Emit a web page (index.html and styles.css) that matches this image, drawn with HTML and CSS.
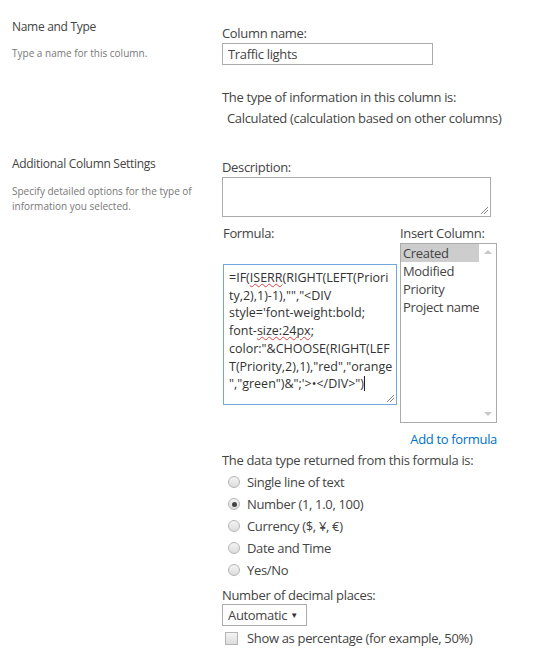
FILE: index.html
```html
<!DOCTYPE html>
<html lang="en">
<head>
  <meta charset="UTF-8">
  <title>Create Column</title>
  <link rel="stylesheet" href="styles.css">
</head>
<body>
  <div class="form">
    <div class="section first">
      <div class="side">
        <h3 class="side-title">Name and Type</h3>
        <p class="side-desc">Type a name for this column.</p>
      </div>
      <div class="fields">
        <div class="label">Column name:</div>
        <input class="text-input" type="text" value="Traffic lights">
        <div class="label type-label">The type of information in this column is:</div>
        <div class="type-value">Calculated (calculation based on other columns)</div>
      </div>
    </div>

    <div class="section second">
      <div class="side">
        <h3 class="side-title">Additional Column Settings</h3>
        <p class="side-desc">Specify detailed options for the type of information you selected.</p>
      </div>
      <div class="fields">
        <div class="label">Description:</div>
        <div class="desc-box">
          <svg class="grip" width="10" height="10" viewBox="0 0 10 10"><path d="M9 2 L2 9 M9 5 L5 9" stroke="#888" stroke-width="1"/></svg>
        </div>

        <div class="formula-row">
          <div class="formula-col">
            <div class="label">Formula:</div>
            <div class="formula-box">
              <div class="formula-text">=IF(<span class="spell">ISERR</span>(RIGHT(LEFT(Priori
ty,2),1)-1),"","&lt;DIV
style='font-weight:bold;
font-<span class="spell">size:24px</span>;
color:"&amp;CHOOSE(RIGHT(LEF
T(Priority,2),1),"red","orange
","green")&amp;";'&gt;•&lt;/DIV&gt;")<span class="caret"></span></div>
              <svg class="grip" width="10" height="10" viewBox="0 0 10 10"><path d="M9 2 L2 9 M9 5 L5 9" stroke="#888" stroke-width="1"/></svg>
            </div>
          </div>
          <div class="insert-col">
            <div class="label">Insert Column:</div>
            <div class="listbox">
              <ul class="options">
                <li class="selected">Created</li>
                <li>Modified</li>
                <li>Priority</li>
                <li>Project name</li>
              </ul>
              <div class="scrollbar">
                <span class="arrow up"></span>
                <span class="arrow down"></span>
              </div>
            </div>
          </div>
        </div>
        <div class="add-link"><a href="#">Add to formula</a></div>

        <div class="label">The data type returned from this formula is:</div>
        <ul class="radios">
          <li><span class="radio"></span>Single line of text</li>
          <li><span class="radio checked"></span>Number (1, 1.0, 100)</li>
          <li><span class="radio"></span>Currency ($, ¥, €)</li>
          <li><span class="radio"></span>Date and Time</li>
          <li><span class="radio"></span>Yes/No</li>
        </ul>

        <div class="label">Number of decimal places:</div>
        <div class="select">Automatic <span class="caret-down">▼</span></div>
        <div class="check-row"><span class="checkbox"></span>Show as percentage (for example, 50%)</div>
      </div>
    </div>
  </div>
</body>
</html>
```

FILE: styles.css
```css
body {
  margin: 0;
  background: #fff;
  font-family: "Open Sans", "Noto Sans", sans-serif;
  color: #444;
}
.section {
  display: flex;
}
.first {
  padding-top: 18px;
}
.second {
  padding-top: 28px;
}
.side {
  width: 222px;
  padding-left: 12px;
  box-sizing: border-box;
}
.side-title {
  margin: 0;
  font-size: 12px;
  letter-spacing: -0.3px;
  font-weight: normal;
  line-height: 18px;
  color: #444;
}
.side-desc {
  margin: 10px 0 0;
  font-size: 10px;
  line-height: 15px;
  color: #777;
  width: 190px;
}
.second .side-desc {
  margin-top: 11px;
}
.fields {
  width: 300px;
  font-size: 13px;
  letter-spacing: -0.33px;
}
.label {
  line-height: 18px;
  color: #444;
}
.first .fields {
  padding-top: 6px;
}
.second .fields {
  padding-top: 3px;
}
.text-input {
  display: block;
  margin: 1px 0 0;
  width: 211px;
  height: 22px;
  box-sizing: border-box;
  border: 1px solid #ababab;
  padding: 0 5px;
  font-family: inherit;
  font-size: 13px;
  letter-spacing: -0.33px;
  color: #444;
}
.type-label {
  margin-top: 23px;
}
.type-value {
  margin-top: 3px;
  padding-left: 5px;
  line-height: 18px;
}
.desc-box {
  position: relative;
  margin-top: 1px;
  width: 269px;
  height: 40px;
  box-sizing: border-box;
  border: 1px solid #ababab;
}
.grip {
  position: absolute;
  right: 1px;
  bottom: 1px;
}
.formula-row {
  display: flex;
  margin-top: 7px;
}
.formula-col {
  width: 177px;
  padding-left: 1px;
}
.formula-box {
  position: relative;
  margin-top: 22px;
  width: 174px;
  height: 141px;
  box-sizing: border-box;
  border: 1px solid #73a7dc;
  padding: 4px 0 0 5px;
}
.formula-text {
  white-space: pre;
  font-size: 12.5px;
  letter-spacing: 0;
  line-height: 17.7px;
  color: #333;
}
.spell {
  text-decoration: underline wavy #e04040;
  text-decoration-thickness: 1px;
}
.caret {
  display: inline-block;
  width: 1px;
  height: 15px;
  background: #222;
  vertical-align: -3px;
}
.insert-col {
  width: 98px;
}
.listbox {
  display: flex;
  margin-top: 1px;
  width: 97px;
  height: 180px;
  box-sizing: border-box;
  border: 1px solid #ababab;
}
.options {
  list-style: none;
  margin: 0;
  padding: 0;
  flex: 1;
  font-size: 13px;
  line-height: 18px;
  color: #444;
  white-space: nowrap;
  overflow: hidden;
}
.options li {
  padding-left: 2px;
}
.options .selected {
  background: #cdcdcd;
}
.scrollbar {
  position: relative;
  width: 17px;
  background: #fff;
}
.arrow {
  position: absolute;
  left: 5px;
  width: 0;
  height: 0;
  border-left: 4px solid transparent;
  border-right: 4px solid transparent;
}
.arrow.up {
  top: 6px;
  border-bottom: 4px solid #c8c8c8;
}
.arrow.down {
  bottom: 6px;
  border-top: 4px solid #c8c8c8;
}
.add-link {
  width: 275px;
  text-align: right;
  margin: 7px 0 3px;
  line-height: 18px;
}
.add-link a {
  color: #0072c6;
  text-decoration: none;
}
.radios {
  list-style: none;
  margin: 2px 0 0;
  padding: 0;
}
.radios li {
  display: flex;
  align-items: center;
  height: 22px;
}
.radio {
  width: 12px;
  height: 12px;
  margin: 0 7px 0 6px;
  border: 1px solid #b5b5b5;
  border-radius: 50%;
  background: linear-gradient(#f4f4f4, #dcdcdc);
  box-sizing: border-box;
  position: relative;
}
.radio.checked::after {
  content: "";
  position: absolute;
  left: 2.5px;
  top: 2.5px;
  width: 5px;
  height: 5px;
  border-radius: 50%;
  background: #444;
}
.radios + .label {
  margin-top: 5px;
}
.select {
  width: 85px;
  height: 22px;
  box-sizing: border-box;
  border: 1px solid #ababab;
  padding-left: 5px;
  line-height: 20px;
}
.caret-down {
  font-size: 8px;
  vertical-align: 2px;
  color: #333;
}
.check-row {
  display: flex;
  align-items: center;
  margin-top: 1px;
  height: 22px;
}
.checkbox {
  width: 11px;
  height: 11px;
  margin: 0 9px 0 3px;
  border: 1px solid #b5b5b5;
  background: linear-gradient(#f4f4f4, #dcdcdc);
}
```
